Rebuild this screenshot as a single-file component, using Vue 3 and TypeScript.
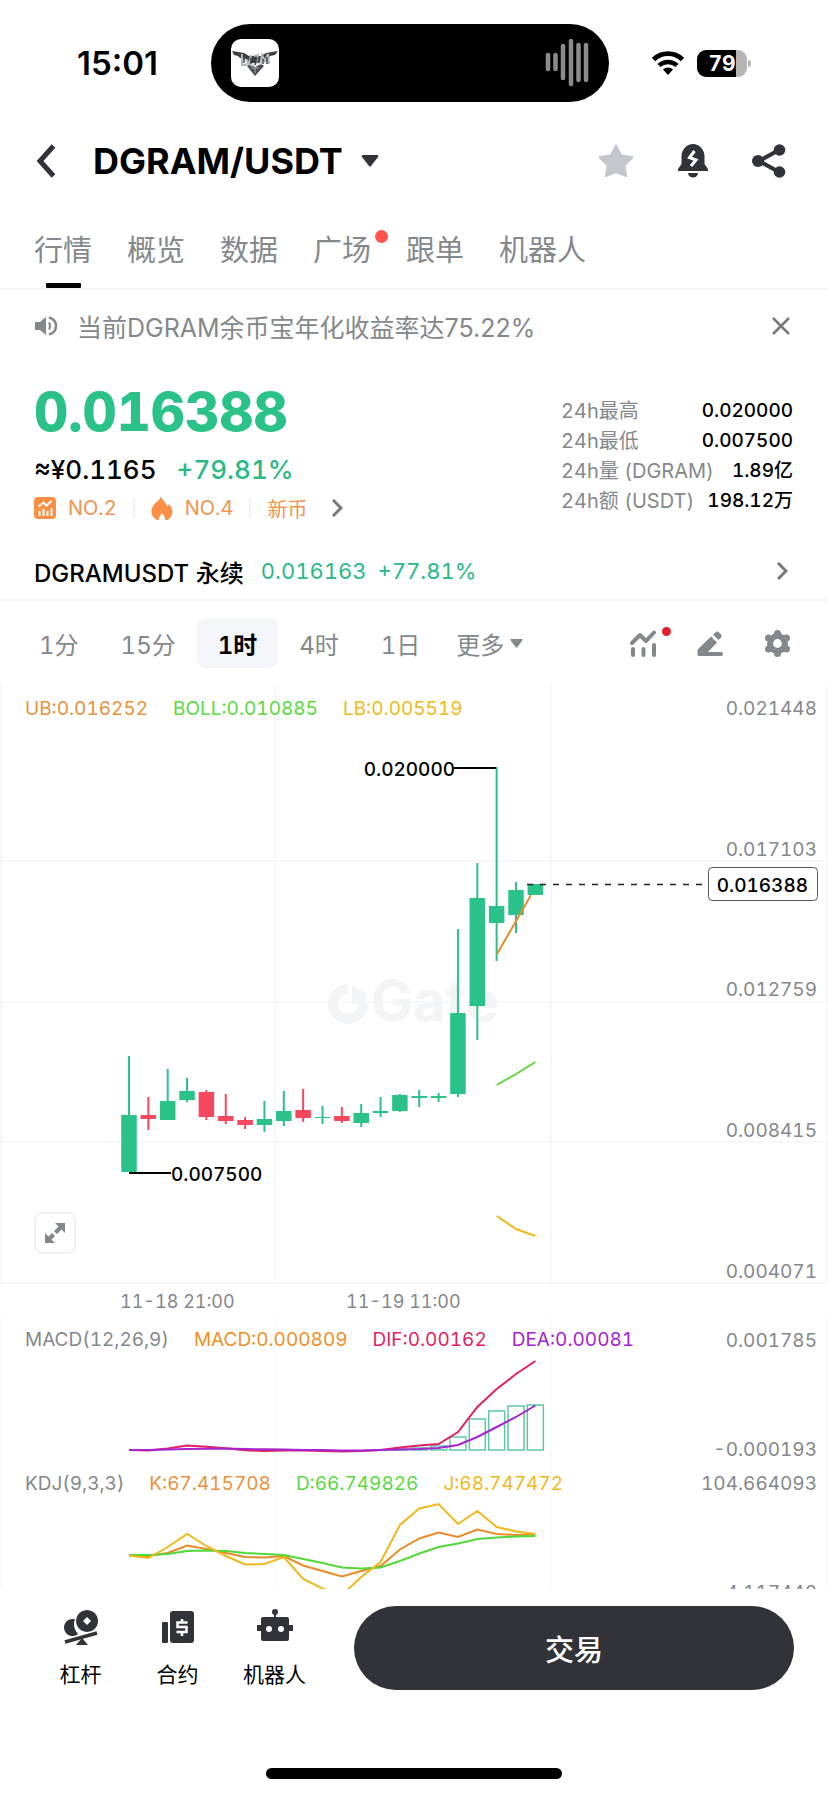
<script setup lang="ts">
interface Candle {
  high: number
  top: number
  bottom: number
  low: number
  up: boolean
}

const tabs = [
  { label: '行情', active: true, dot: false },
  { label: '概览', active: false, dot: false },
  { label: '数据', active: false, dot: false },
  { label: '广场', active: false, dot: true },
  { label: '跟单', active: false, dot: false },
  { label: '机器人', active: false, dot: false },
]

const stats = [
  { label: '24h最高', value: '0.020000' },
  { label: '24h最低', value: '0.007500' },
  { label: '24h量 (DGRAM)', value: '1.89亿' },
  { label: '24h额 (USDT)', value: '198.12万' },
]

const intervals = ['1分', '15分', '1时', '4时', '1日']
const activeInterval = '1时'

const FIRST_X = 129
const STEP = 19.35
const xAt = (i: number): number => FIRST_X + STEP * i

const c = (high: number, top: number, bottom: number, low: number, up = true): Candle => ({ high, top, bottom, low, up })
const candles: Candle[] = [
  c(1056, 1115, 1172, 1172),
  c(1097, 1115, 1119, 1130, false),
  c(1069, 1101, 1120, 1120),
  c(1078, 1091, 1100, 1102),
  c(1090, 1092, 1117, 1120, false),
  c(1094, 1116, 1121, 1124, false),
  c(1117, 1120, 1125, 1129, false),
  c(1101, 1119, 1125, 1132),
  c(1091, 1111, 1121, 1126),
  c(1089, 1110, 1118, 1122, false),
  c(1106, 1117, 1118, 1124),
  c(1107, 1116, 1121, 1123, false),
  c(1104, 1113, 1123, 1127),
  c(1097, 1111, 1113, 1117),
  c(1094, 1095, 1111, 1112),
  c(1090, 1096, 1098, 1107),
  c(1093, 1096, 1098, 1102),
  c(929, 1013, 1094, 1097),
  c(863, 898, 1006, 1040),
  c(767, 906, 923, 961),
  c(882, 890, 915, 933),
  c(884, 884, 895, 895),
]

const toPoints = (ys: number[], start = 0): string =>
  ys.map((y, i) => `${xAt(i + start).toFixed(1)},${y}`).join(' ')

const boll = toPoints([1085, 1074, 1062], 19)
const lower = toPoints([1216, 1229, 1236], 19)
const dif = toPoints([1450, 1450.5, 1448.5, 1445.5, 1446.7, 1448.3, 1450.3, 1451, 1450.5, 1450.5, 1451, 1451.5, 1451, 1450, 1447.5, 1445.5, 1444, 1432, 1407, 1389, 1374, 1361])
const dea = toPoints([1450, 1450, 1449.5, 1449, 1448.7, 1448.5, 1449, 1449.3, 1449.5, 1450, 1450, 1450.5, 1450.5, 1450, 1449.5, 1449, 1448, 1445, 1437, 1427, 1417, 1405.5])
const kLine = toPoints([1555.5, 1556, 1553, 1545.5, 1549, 1553, 1557, 1557.5, 1556, 1565.5, 1571, 1576.5, 1571, 1566, 1549.5, 1538.5, 1532.5, 1537, 1529.5, 1534, 1535, 1534.5])
const dLine = toPoints([1555, 1555, 1554, 1551, 1550.5, 1551, 1553, 1554, 1555, 1559, 1563, 1567.5, 1568.5, 1567.5, 1561, 1553.5, 1547, 1543.5, 1539, 1537.5, 1536.5, 1536])
const jLine = toPoints([1555.5, 1558, 1547, 1534, 1546, 1556, 1564.5, 1564, 1557, 1579, 1588.5, 1595, 1577, 1562, 1525, 1508.5, 1504, 1524, 1511, 1527, 1531.5, 1534])

const macdBars = [
  { i: 14, top: 1449 },
  { i: 15, top: 1448 },
  { i: 16, top: 1446 },
  { i: 17, top: 1437 },
  { i: 18, top: 1419 },
  { i: 19, top: 1411 },
  { i: 20, top: 1406 },
  { i: 21, top: 1405 },
]

const priceTicks = [
  { y: 715, text: '0.021448' },
  { y: 856, text: '0.017103' },
  { y: 996, text: '0.012759' },
  { y: 1137, text: '0.008415' },
  { y: 1278, text: '0.004071' },
]
const gridY = [861, 1002, 1142, 1283]
const gridX = [1, 275, 551, 827]
</script>

<template>
  <div class="page">
    <header class="status">
      <time class="clock">15:01</time>
      <div class="island">
        <svg class="app-icon" viewBox="0 0 48 48" aria-hidden="true">
          <rect width="48" height="48" rx="10" fill="#fff" />
          <path d="M1 12l12 2 5 3h12l5-3 12-2-3 4-5 1-2 3-6 1-3 3H18l-3-4-6-1-2-2-4-1z" fill="#3c3d40" />
          <path d="M16 27l8 10 9-10-3-2-6 3-5-3z" fill="#4c4e52" />
          <path d="M11 15v11h4l2-3-2-3M20 16l-2 9 4 2M23 17l4-1-2 9M29 26l2-10 3 6 3-7 1 10" fill="none" stroke="#b4b7bb" stroke-width="2" />
          <path d="M13 17v7M20 19v6M26 18l-2 8M32 20v5M36 18v7" stroke="#414346" stroke-width="1.500" />
          <path d="M24 28v6M20 29h8" stroke="#a9acb0" stroke-width="1" />
        </svg>
        <svg class="wave" viewBox="0 0 44 48" aria-hidden="true">
          <path d="M3 16v14M10.500 16v14M18 7v32M26 2v43M33.500 6v35M41 6v35" stroke="#8b8b8b" stroke-width="4.500" stroke-linecap="round" />
        </svg>
      </div>
      <div class="signals">
        <svg class="wifi" viewBox="0 0 34 26" aria-hidden="true">
          <path d="M2.500 9.500a21 21 0 0 1 29 0" fill="none" stroke="#000" stroke-width="4.800" />
          <path d="M8 15.500a13 13 0 0 1 18 0" fill="none" stroke="#000" stroke-width="4.500" />
          <path d="M12 19.500a7.500 7.500 0 0 1 10 0L17 25z" fill="#000" />
        </svg>
        <div class="battery"><span>79</span></div>
      </div>
    </header>

    <nav class="titlebar">
      <button class="icon-btn" aria-label="返回">
        <svg width="22" height="34" viewBox="0 0 22 34"><path d="M18.500 2L5 17l13.500 15" fill="none" stroke="#313339" stroke-width="5" /></svg>
      </button>
      <button class="pair">
        <span>DGRAM/USDT</span>
        <svg width="18" height="12" viewBox="0 0 18 12"><path d="M2 0h14q2 0 1 2l-7 9q-1 1-2 0L1 2Q0 0 2 0z" fill="#313339" /></svg>
      </button>
      <div class="actions">
        <button class="icon-btn" aria-label="收藏">
          <svg width="36" height="34" viewBox="0 0 36 34"><path d="M18 1.500l5 9.800 11.500 1.900-8 8.200L28.200 32 18 28 7.800 32l1.700-10.600-8-8.200L13 11.300z" fill="#c4c8cc" stroke="#c4c8cc" stroke-width="2" stroke-linejoin="round" /></svg>
        </button>
        <button class="icon-btn" aria-label="提醒">
          <svg width="32" height="34" viewBox="0 0 32 34"><path d="M4.500 12.500a11.500 12.500 0 0 1 23 0V20l3.500 5v2H1v-2l3.500-5zM11 29h10a5 4.500 0 0 1-10 0z" fill="#313339" /><path d="M17.500 7l-5 6.500 6.500 2.500-5 6" fill="none" stroke="#fff" stroke-width="3" /></svg>
        </button>
        <button class="icon-btn" aria-label="分享">
          <svg width="34" height="34" viewBox="0 0 34 34"><path d="M27 6L7 17l20 11" fill="none" stroke="#313339" stroke-width="4" /><circle cx="27.500" cy="6" r="5.800" fill="#313339" /><circle cx="6" cy="17" r="6" fill="#313339" /><circle cx="27.500" cy="28" r="5.800" fill="#313339" /></svg>
        </button>
      </div>
    </nav>

    <nav class="tabs">
      <a v-for="t in tabs" :key="t.label" href="#" :class="{ active: t.active }">{{ t.label }}<i v-if="t.dot" class="dot"></i></a>
    </nav>

    <section class="notice">
      <svg width="24" height="20" viewBox="0 0 24 20" aria-hidden="true"><path d="M0 6h5l6-5v18l-6-5H0z" fill="#84888c" /><path d="M14 6.500q2 3.500 0 7" fill="none" stroke="#84888c" stroke-width="2" /><path d="M14 1.500q7 2 7 8.500t-7 8.500" fill="none" stroke="#84888c" stroke-width="2.500" /></svg>
      <p>当前DGRAM余币宝年化收益率达75.22%</p>
      <button class="icon-btn" aria-label="关闭">
        <svg width="18" height="18" viewBox="0 0 18 18"><path d="M1 1l16 16M17 1L1 17" stroke="#77797d" stroke-width="2.500" /></svg>
      </button>
    </section>

    <section class="summary">
      <div>
        <h1 class="price">0.016388</h1>
        <p class="fiat"><span>≈¥0.1165</span><span class="up">+79.81%</span></p>
        <div class="badges">
          <svg width="22" height="22" viewBox="0 0 22 22" aria-hidden="true"><rect width="22" height="22" rx="4" fill="#fb8f43" /><path d="M4.500 9.500l5-4 3 3 5-4.500" fill="none" stroke="#fff" stroke-width="2" /><path d="M5.500 14v5M9.500 12v7M13.500 14v5M17.500 11v8" stroke="#fff" stroke-width="2" /></svg>
          <a href="#">NO.2</a>
          <i class="sep"></i>
          <svg width="22" height="24" viewBox="0 0 22 24" aria-hidden="true"><path d="M10 0c1 5 6 6 6 11l2-3c6 7 3 14-2 16h-2c1-3-2-5-3-7-1 3-4 3-3 7H6C0 21-1 15 2 10 4 6 9 5 10 0z" fill="#fb8f43" /></svg>
          <a href="#">NO.4</a>
          <i class="sep"></i>
          <a href="#">新币</a>
          <svg class="chev" width="12" height="18" viewBox="0 0 12 18" aria-hidden="true"><path d="M2 1l8 8-8 8" fill="none" stroke="#77797d" stroke-width="3" /></svg>
        </div>
      </div>
      <dl class="stats">
        <div v-for="s in stats" :key="s.label"><dt>{{ s.label }}</dt><dd>{{ s.value }}</dd></div>
      </dl>
    </section>

    <a class="perp" href="#">
      <span class="perp-name">DGRAMUSDT 永续</span>
      <span class="up">0.016163</span>
      <span class="up">+77.81%</span>
      <svg width="12" height="18" viewBox="0 0 12 18" aria-hidden="true"><path d="M2 1l8 8-8 8" fill="none" stroke="#77797d" stroke-width="3" /></svg>
    </a>

    <div class="toolbar">
      <button v-for="v in intervals" :key="v" class="interval" :class="{ on: v === activeInterval }">{{ v }}</button>
      <button class="interval more">更多<svg width="13" height="9" viewBox="0 0 13 9"><path d="M1 0h11q1 0 0 2L7 8.500H6L1 2Q0 0 1 0z" fill="#84888c" /></svg></button>
      <div class="tools">
        <button class="icon-btn" aria-label="指标">
          <svg width="27" height="27" viewBox="0 0 27 27"><path d="M2 13l8-8 6 6 8-8.500" fill="none" stroke="#84888c" stroke-width="4" stroke-linecap="round" stroke-linejoin="round" /><path d="M3 19v6M13.500 19v6M24 15v10" stroke="#84888c" stroke-width="4" stroke-linecap="round" /></svg>
          <i class="dot small"></i>
        </button>
        <button class="icon-btn" aria-label="画线">
          <svg width="27" height="27" viewBox="0 0 27 27"><path d="M14 6.500l6 6L11 22h13q2 0 2 2t-2 2H2q-2 0-1.500-2V19.500zM16 4.500L19 2q1.500-1 3 .5l2 2Q25.500 6 24 7.500L21.500 10z" fill="#84888c" /></svg>
        </button>
        <button class="icon-btn" aria-label="设置">
          <svg width="27" height="27" viewBox="0 0 27 27"><g fill="#84888c"><circle cx="13.500" cy="13.500" r="10.500" /><circle cx="13.500" cy="3.500" r="3.500" /><circle cx="13.500" cy="23.500" r="3.500" /><circle cx="4.500" cy="8" r="3.500" /><circle cx="22.500" cy="8" r="3.500" /><circle cx="4.500" cy="19" r="3.500" /><circle cx="22.500" cy="19" r="3.500" /></g><circle cx="13.500" cy="13.500" r="4.400" fill="#fff" /></svg>
        </button>
      </div>
    </div>

    <section class="panel main">
      <p class="legend"><span class="orange">UB:0.016252</span><span class="green">BOLL:0.010885</span><span class="yellow">LB:0.005519</span></p>
      <svg class="plot" viewBox="0 685 828 633" role="img" aria-label="K线图">
        <g stroke="#f7f8f9" stroke-width="2">
          <line v-for="y in gridY" :key="y" x1="0" x2="828" :y1="y" :y2="y" />
          <line v-for="x in gridX" :key="x" :x1="x" :x2="x" y1="685" y2="1283" />
        </g>
        <g>
          <path d="M348 984a20 20 0 1 0 20 20h-10a10 10 0 1 1-10-10zM352 984l14 10v10h-14z" fill="#f3f4f6" />
          <text class="mark" x="371" y="1021">Gate</text>
        </g>
        <g v-for="(k, i) in candles" :key="i" :fill="k.up ? '#2bc28a' : '#f5475d'">
          <rect :x="xAt(i) - 1" :y="k.high" width="2" :height="k.low - k.high" />
          <rect :x="xAt(i) - 7.75" :y="k.top" width="15.5" :height="k.bottom - k.top" />
        </g>
        <g fill="none" stroke-width="2">
          <path d="M497 954L531 895" stroke="#e98b28" />
          <polyline :points="boll" stroke="#5fd93a" />
          <polyline :points="lower" stroke="#efb91c" />
          <path d="M454 768h42M129 1173h42" stroke="#000" />
        </g>
        <path d="M527 884.500H709" stroke="#222" stroke-width="1.500" stroke-dasharray="6 7" />
        <rect x="708.500" y="867.500" width="109" height="33" rx="4" fill="#fff" stroke="#55585c" />
        <text class="ink" x="808" y="892" text-anchor="end">0.016388</text>
        <text class="ink" x="455" y="776" text-anchor="end">0.020000</text>
        <text class="ink" x="171" y="1181">0.007500</text>
        <text v-for="t in priceTicks" :key="t.text" x="817" :y="t.y" text-anchor="end">{{ t.text }}</text>
        <text class="date" x="120" y="1308">11-18 21:00</text>
        <text class="date" x="346" y="1308">11-19 11:00</text>
      </svg>
      <button class="expand" aria-label="全屏">
        <svg width="20" height="20" viewBox="0 0 20 20"><path d="M10 0h10v10l-3.500-3.500-4.500 4.500-3-3 4.500-4.500zM10 20H0V10l3.500 3.500L7 10l3 3-3.500 3.500z" fill="#84888c" /></svg>
      </button>
    </section>

    <section class="panel">
      <p class="legend"><span>MACD(12,26,9)</span><span class="orange2">MACD:0.000809</span><span class="pink">DIF:0.00162</span><span class="purple">DEA:0.00081</span></p>
      <svg class="plot" viewBox="0 1318 828 144" role="img" aria-label="MACD">
        <path d="M1 1318v144M275 1318v144M551 1318v144M827 1318v144" stroke="#f9fafa" stroke-width="2" />
        <rect v-for="b in macdBars" :key="b.i" :x="xAt(b.i) - 8" :y="b.top" width="16" :height="1450 - b.top" fill="none" stroke="#5cc9a4" stroke-width="1.500" />
        <polyline :points="dif" fill="none" stroke="#e01f64" stroke-width="2" />
        <polyline :points="dea" fill="none" stroke="#a624cf" stroke-width="2" />
        <text x="817" y="1347" text-anchor="end">0.001785</text>
        <text x="817" y="1456" text-anchor="end">-0.000193</text>
      </svg>
    </section>

    <section class="panel">
      <p class="legend"><span>KDJ(9,3,3)</span><span class="orange">K:67.415708</span><span class="green">D:66.749826</span><span class="yellow">J:68.747472</span></p>
      <svg class="plot" viewBox="0 1462 828 127" role="img" aria-label="KDJ">
        <path d="M1 1462v127M275 1462v127M551 1462v127M827 1462v127" stroke="#f9fafa" stroke-width="2" />
        <g fill="none" stroke-width="2">
          <polyline :points="kLine" stroke="#e98b28" />
          <polyline :points="dLine" stroke="#53d83a" />
          <polyline :points="jLine" stroke="#efb91c" />
        </g>
        <text x="817" y="1490" text-anchor="end">104.664093</text>
        <text x="817" y="1599" text-anchor="end">4.117440</text>
      </svg>
    </section>

    <footer class="bottom">
      <a class="entry" href="#">
        <svg width="36" height="38" viewBox="0 0 36 38" aria-hidden="true"><path d="M10 10a8.500 8.500 0 1 0 5 15Q9 18 12 10z" fill="#313339" /><path fill-rule="evenodd" d="M24 1a11 11 0 1 0 .1 0zM24 8l4 4-4 4-4-4z" fill="#313339" /><path d="M2 33l32-9" stroke="#313339" stroke-width="3.500" /><path d="M19 29l6 7H13z" fill="#313339" /></svg>
        <span>杠杆</span>
      </a>
      <a class="entry" href="#">
        <svg width="36" height="38" viewBox="0 0 36 38" aria-hidden="true"><rect x="2" y="13" width="6" height="21" rx="1" fill="#313339" /><rect x="10" y="2" width="24" height="32" rx="3" fill="#313339" /><path d="M27.500 13.500h-10v4.500h9v5h-10M22 10v4M22 23v4" fill="none" stroke="#fff" stroke-width="2.500" /></svg>
        <span>合约</span>
      </a>
      <a class="entry" href="#">
        <svg width="36" height="38" viewBox="0 0 36 38" aria-hidden="true"><circle cx="18" cy="3" r="3" fill="#313339" /><path d="M17 4h2v4h11q2 0 2 2v6h4v6h-4v8q0 2-2 2H6q-2 0-2-2v-8H0v-6h4v-6q0-2 2-2h11z" fill="#313339" /><circle cx="12" cy="20" r="3" fill="#fff" /><circle cx="24" cy="20" r="3" fill="#fff" /></svg>
        <span>机器人</span>
      </a>
      <button class="trade">交易</button>
    </footer>
    <div class="home"></div>
  </div>
</template>

<style>
body {
  background: #fff;
}
</style>

<style scoped>
.page {
  font-family: Inter, "Noto Sans CJK SC", sans-serif;
  font-variant-numeric: tabular-nums;
  color: #000;
  background: #fff;
  overflow: hidden;
}
button {
  border: 0;
  padding: 0;
  background: none;
  font: inherit;
  color: inherit;
}
a {
  color: inherit;
  text-decoration: none;
}
p, h1, dl, dd {
  margin: 0;
}
svg {
  display: block;
  flex: none;
}
.icon-btn {
  position: relative;
  flex: none;
}
.up {
  color: #2bb985;
}
.status {
  display: grid;
  grid-template-columns: 1fr 398px 1fr;
  align-items: center;
  padding: 24px 8px 0 0;
}
.clock {
  justify-self: center;
  padding-left: 24px;
  font-size: 33px;
  font-weight: 600;
  font-variant-numeric: normal;
}
.island {
  height: 78px;
  border-radius: 39px;
  background: #000;
  display: flex;
  align-items: center;
  justify-content: space-between;
  padding: 0 20px;
  box-sizing: border-box;
}
.app-icon {
  width: 48px;
  height: 48px;
}
.wave {
  width: 44px;
  height: 48px;
}
.signals {
  display: flex;
  align-items: center;
  gap: 12px;
  padding-left: 42px;
}
.wifi {
  width: 34px;
  height: 26px;
}
.battery {
  position: relative;
  width: 50px;
  height: 27px;
  border-radius: 9px;
  background: linear-gradient(90deg, #000 78%, #b5b5b5 78%);
  color: #fff;
  font-size: 21px;
  font-weight: 700;
  line-height: 27px;
  text-align: center;
}
.battery::after {
  content: "";
  position: absolute;
  right: -4px;
  top: 10px;
  width: 3px;
  height: 7px;
  border-radius: 0 3px 3px 0;
  background: #b5b5b5;
}
.titlebar {
  display: flex;
  align-items: center;
  height: 118px;
  padding: 0 42px 0 35px;
}
.pair {
  display: flex;
  align-items: center;
  gap: 18px;
  margin-left: 36px;
  font-size: 36px;
  font-weight: 700;
}
.actions {
  display: flex;
  gap: 43px;
  margin-left: auto;
}
.tabs {
  display: flex;
  gap: 35px;
  height: 68px;
  padding: 0 34px;
  border-bottom: 2px solid #f5f6f7;
}
.tabs a {
  position: relative;
  font-size: 29px;
  line-height: 62px;
  color: #84888c;
}
.tabs .active::after {
  content: "";
  position: absolute;
  left: 12px;
  right: 11px;
  bottom: 0;
  height: 5px;
  border-radius: 1px;
  background: #000;
}
.dot {
  position: absolute;
  top: 10px;
  right: -17px;
  width: 13px;
  height: 13px;
  border-radius: 50%;
  background: #ff5449;
}
.dot.small {
  top: -3px;
  right: -14px;
  width: 9px;
  height: 9px;
  background: #e0202e;
}
.notice {
  display: flex;
  align-items: center;
  gap: 18px;
  height: 72px;
  padding: 0 38px 0 35px;
  font-size: 25px;
  font-variant-numeric: normal;
  color: #84888c;
}
.notice p {
  flex: 1;
}
.summary {
  display: flex;
  justify-content: space-between;
  padding: 18px 35px 0 34px;
}
.price {
  font-size: 53px;
  line-height: 64px;
  font-weight: 800;
  color: #2bc28a;
}
.fiat {
  display: flex;
  gap: 20px;
  padding-top: 8px;
  font-size: 26px;
  line-height: 36px;
  font-weight: 500;
}
.badges {
  display: flex;
  align-items: center;
  gap: 12px;
  height: 40px;
  font-size: 20px;
  color: #f0934f;
}
.sep {
  width: 2px;
  height: 20px;
  margin: 0 4px;
  background: #f1f2f3;
}
.chev {
  margin-left: 12px;
}
.stats {
  width: 232px;
  padding-top: 16px;
  font-size: 19px;
}
.stats div {
  display: flex;
  justify-content: space-between;
  line-height: 30px;
  white-space: nowrap;
}
.stats dt {
  font-size: 20px;
  color: #84888c;
}
.stats dd {
  font-weight: 500;
}
.perp {
  display: flex;
  align-items: center;
  gap: 11px;
  height: 56px;
  margin-top: 15px;
  padding: 0 40px 0 34px;
  border-bottom: 2px solid #f5f6f7;
  font-size: 22px;
}
.perp-name {
  margin-right: 6px;
  font-size: 24px;
  font-weight: 500;
}
.perp svg {
  margin-left: auto;
}
.toolbar {
  display: flex;
  align-items: center;
  height: 84px;
  padding: 0 37px 0 18px;
}
.interval {
  height: 50px;
  padding: 0 21px;
  border-radius: 9px;
  font-size: 24px;
  color: #84888c;
}
.interval.on {
  background: #f4f5f8;
  color: #000;
  font-weight: 600;
}
.more {
  display: flex;
  align-items: center;
  gap: 6px;
  padding-left: 15px;
}
.tools {
  display: flex;
  gap: 40px;
  margin-left: auto;
}
.panel {
  position: relative;
  font-size: 19px;
  color: #84888c;
}
.legend {
  position: absolute;
  top: 8px;
  left: 25px;
  display: flex;
  gap: 25px;
  line-height: 28px;
}
.main .legend {
  top: 10px;
}
.plot {
  width: 100%;
  height: auto;
  font-size: 19px;
}
.plot text {
  fill: #84888c;
}
.plot .ink {
  fill: #000;
  font-weight: 500;
}
.plot .date {
  font-size: 18px;
}
.plot .mark {
  fill: #f3f4f6;
  font-size: 56px;
  font-weight: 700;
}
.expand {
  position: absolute;
  left: 34px;
  bottom: 64px;
  display: grid;
  place-items: center;
  width: 42px;
  height: 42px;
  border: 2px solid #f1f2f3;
  border-radius: 8px;
  background: #fff;
}
.orange {
  color: #e9913c;
}
.orange2 {
  color: #f09128;
}
.green {
  color: #5bd943;
}
.yellow {
  color: #efb91c;
}
.pink {
  color: #e01f64;
}
.purple {
  color: #a624cf;
}
.bottom {
  display: flex;
  padding: 17px 34px 0 32px;
}
.entry {
  display: flex;
  flex-direction: column;
  align-items: center;
  gap: 14px;
  width: 97px;
  padding-top: 3px;
  font-size: 21px;
  line-height: 28px;
}
.trade {
  flex: 1;
  height: 84px;
  margin-left: 31px;
  border-radius: 42px;
  background: #313339;
  color: #fff;
  font-size: 29px;
  font-weight: 500;
}
.home {
  width: 296px;
  height: 11px;
  margin: 78px auto 17px;
  border-radius: 6px;
  background: #000;
}
</style>
